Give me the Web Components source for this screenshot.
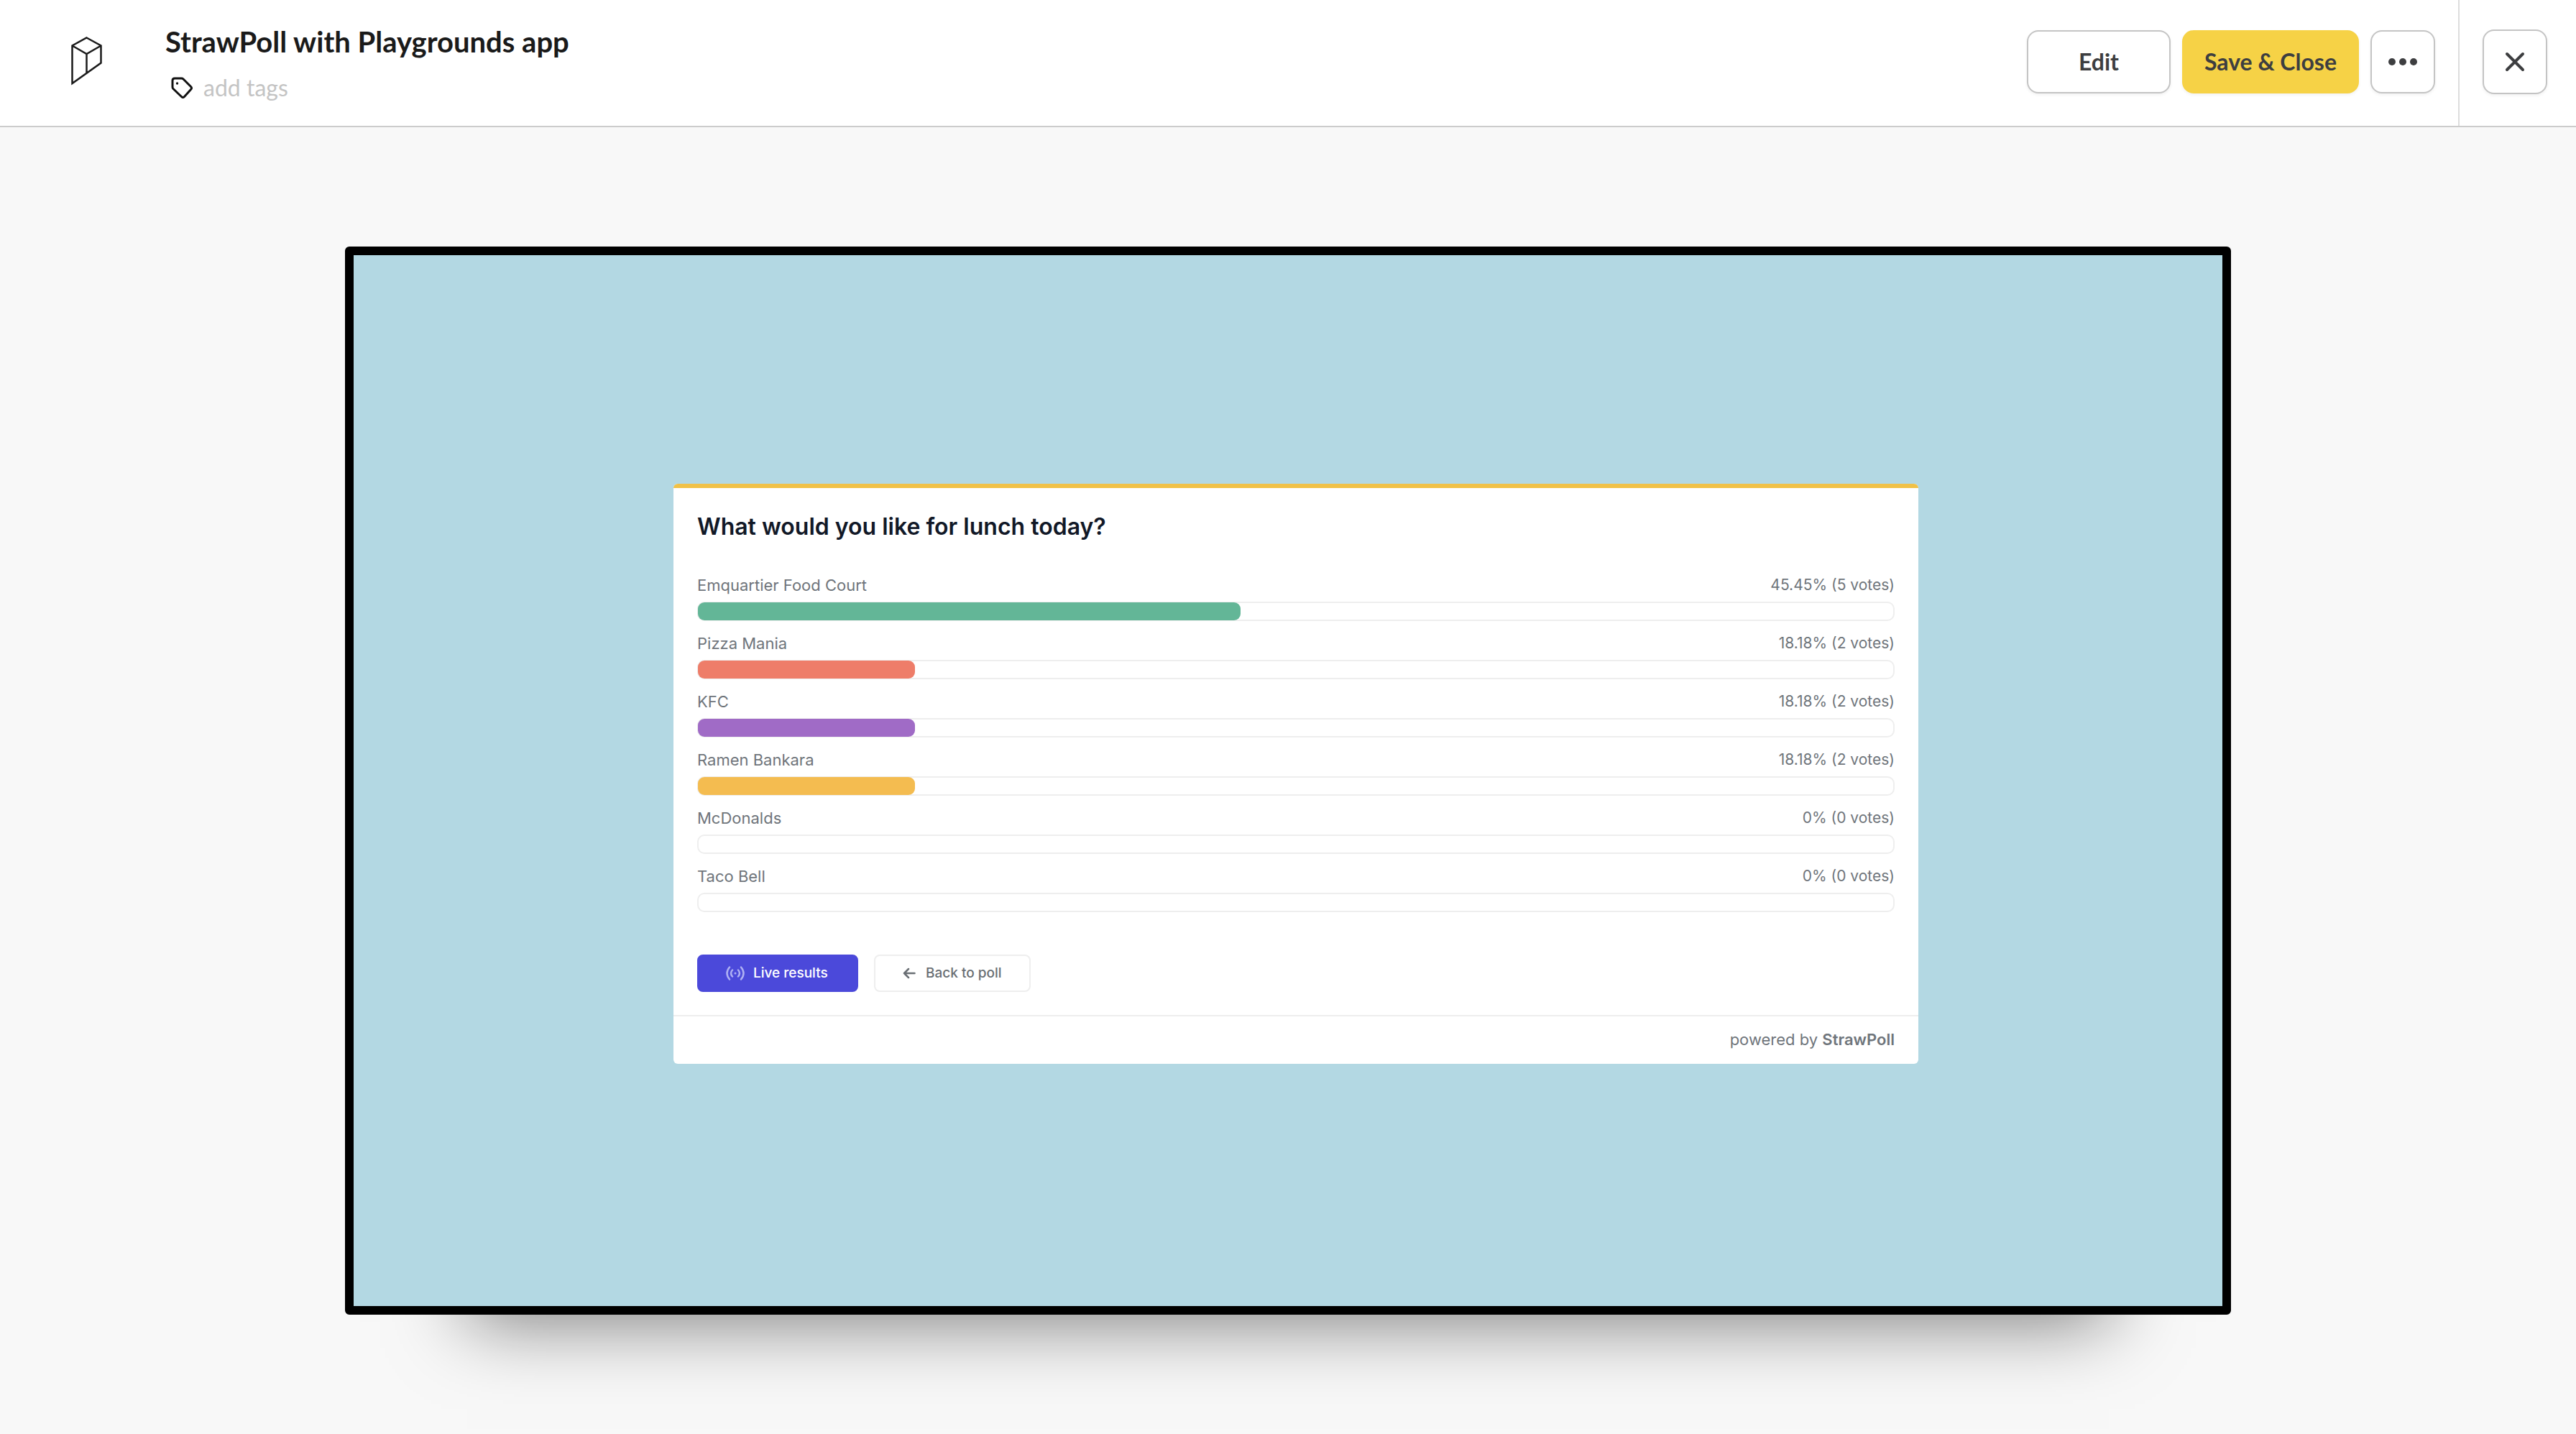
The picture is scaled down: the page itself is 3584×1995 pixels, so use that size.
<!DOCTYPE html>
<html lang="en">
<head>
<meta charset="utf-8">
<meta name="viewport" content="width=device-width, initial-scale=1">
<title>StrawPoll with Playgrounds app</title>
<style>
  html, body { margin: 0; height: 100%; }
  body { background: #f8f8f8; font-family: Lato, "Liberation Sans", sans-serif; }
</style>
</head>
<body>
<app-shell>
  <app-header slot="header">
    <brand-logo slot="logo"></brand-logo>
    <app-heading slot="heading">StrawPoll with Playgrounds app</app-heading>
    <app-button slot="actions" wide>Edit</app-button>
    <app-button slot="actions" primary>Save &amp; Close</app-button>
    <app-button slot="actions" square label="More actions">
      <svg width="40" height="16" viewBox="0 0 40 16" fill="#3d3e40" aria-hidden="true"><circle cx="5" cy="8" r="5"/><circle cx="20" cy="8" r="5"/><circle cx="35" cy="8" r="5"/></svg>
    </app-button>
    <app-button slot="close" square tall label="Close">
      <svg width="28" height="28" viewBox="0 0 28 28" fill="none" stroke="#3d3e40" stroke-width="4" stroke-linecap="round" aria-hidden="true"><path d="M3 3l22 22M25 3L3 25"/></svg>
    </app-button>
  </app-header>
  <preview-screen>
    <poll-card question="What would you like for lunch today?">
      <poll-option percent="45.45" votes="5" color="#63b697">Emquartier Food Court</poll-option>
      <poll-option percent="18.18" votes="2" color="#ee7d69">Pizza Mania</poll-option>
      <poll-option percent="18.18" votes="2" color="#a06bc6">KFC</poll-option>
      <poll-option percent="18.18" votes="2" color="#f4bc50">Ramen Bankara</poll-option>
      <poll-option percent="0" votes="0">McDonalds</poll-option>
      <poll-option percent="0" votes="0">Taco Bell</poll-option>
      <poll-button slot="actions" primary>
        <svg slot="icon" width="26" height="20" viewBox="0 0 26 20" fill="none" stroke="#aeb0f3" stroke-width="2.500" stroke-linecap="round" aria-hidden="true"><path d="M5 1.500Q-2 10 5 18.500M21 1.500Q28 10 21 18.500M9 5.500Q5 10 9 14.500M17 5.500Q21 10 17 14.500"/><circle cx="13" cy="10" r="1.500" fill="#aeb0f3" stroke="none"/></svg>
        Live results
      </poll-button>
      <poll-button slot="actions">
        <svg slot="icon" width="20" height="16" viewBox="0 0 20 16" fill="none" stroke="#6a6f74" stroke-width="2.500" stroke-linecap="round" stroke-linejoin="round" aria-hidden="true"><path d="M8 2L2 8l6 6M2 8h14.500"/></svg>
        Back to poll
      </poll-button>
    </poll-card>
  </preview-screen>
</app-shell>

<script>
  const define = (name, html, setup) => {
    const template = document.createElement('template');
    template.innerHTML = html;
    customElements.define(name, class extends HTMLElement {
      constructor() {
        super();
        this.attachShadow({ mode: 'open' }).append(template.content.cloneNode(true));
      }
      connectedCallback() {
        if (setup) setup(this, this.shadowRoot);
      }
    });
  };

  define('app-shell', `
    <style>
      :host { display: flex; flex-direction: column; min-height: 100vh; }
      main { flex: 1; display: flex; align-items: center; justify-content: center; }
    </style>
    <slot name="header"></slot>
    <main><slot></slot></main>`);

  define('app-header', `
    <style>
      :host { display: block; background: #fff; border-bottom: 2px solid #ccc; }
      header { display: flex; align-items: flex-start; padding: 0 40px 0 96px; }
      .logo { padding-top: 48px; width: 134px; flex: none; }
      .heading { flex: 1; padding-top: 34px; }
      .actions { display: flex; gap: 16px; padding: 42px 32px 0 0; }
      .close { border-left: 2px solid #ddd; padding: 41px 0 44px 32px; }
    </style>
    <header>
      <div class="logo"><slot name="logo"></slot></div>
      <div class="heading"><slot name="heading"></slot></div>
      <div class="actions"><slot name="actions"></slot></div>
      <div class="close"><slot name="close"></slot></div>
    </header>`);

  define('brand-logo', `
    <style>:host, svg { display: block; }</style>
    <svg width="48" height="72" viewBox="0 0 48 72" fill="none" stroke="#1b1b1b" stroke-width="2.500" role="img" aria-label="Home">
      <path d="M24.500 4.500L44.500 15.500V39.500L4.500 68V15.500ZM4.500 15.500L24.500 27L44.500 15.500M24.500 27V53.500"/>
    </svg>`);

  define('app-heading', `
    <style>
      :host { display: block; }
      h1 { margin: 0; font-size: 40px; line-height: 48px; font-weight: 700; color: #1a1a1a; }
      label { display: flex; align-items: center; gap: 14px; margin-top: 20px; padding-left: 7px; }
      svg { display: block; }
      input { flex: 1; min-width: 0; border: 0; padding: 0; outline: 0; background: none; height: 40px; font: 32px/40px Lato, "Liberation Sans", sans-serif; color: #1a1a1a; }
      input::placeholder { color: #c4c4c4; opacity: 1; }
    </style>
    <h1><slot></slot></h1>
    <label>
      <svg width="32" height="32" viewBox="0 0 32 32" fill="none" stroke="#111" stroke-width="3" stroke-linejoin="round" aria-hidden="true">
        <path d="M6 3H15.500Q17 3 18 4L28.500 14.500Q30.500 16.500 28.500 18.500L19.500 28.500Q17.500 30.500 15.500 28.500L4 17.500Q3 16.500 3 15V6Q3 3 6 3Z"/>
        <circle cx="9.500" cy="10" r="1.700" fill="#111" stroke="none"/>
      </svg>
      <input type="text" aria-label="Tags" placeholder="add tags">
    </label>`);

  define('app-button', `
    <style>
      :host { display: block; }
      button { box-sizing: border-box; display: flex; align-items: center; justify-content: center; height: 88px; padding: 0 24px; border: 2px solid #c4c4c4; border-radius: 16px; background: #fff; color: #3d3e40; font: 700 32px/40px Lato, "Liberation Sans", sans-serif; box-shadow: 0 2px 4px rgba(0, 0, 0, .06); }
      :host([wide]) button { min-width: 200px; }
      :host([primary]) button { min-width: 246px; background: #f6d246; border-color: #f6d246; }
      :host([square]) button { width: 90px; padding: 0; }
      :host([tall]) button { height: 90px; }
      ::slotted(svg) { display: block; }
    </style>
    <button type="button"><slot></slot></button>`, (host, root) => {
      if (host.hasAttribute('label')) root.querySelector('button').setAttribute('aria-label', host.getAttribute('label'));
    });

  define('preview-screen', `
    <style>
      :host { box-sizing: content-box; width: 72.545%; aspect-ratio: 16 / 9; border: 12px solid #000; border-radius: 6px; background: #b3d8e3; box-shadow: 0 180px 100px -170px rgba(0, 0, 0, .5); display: block; }
      .stage { box-sizing: border-box; height: 100%; display: flex; align-items: center; justify-content: center; padding: 0 0 20px 22px; }
    </style>
    <div class="stage"><slot></slot></div>`);

  define('poll-card', `
    <style>
      :host { display: block; width: 100%; max-width: 1732px; overflow: hidden; border-radius: 6px; background: #fff; color: #6f757b; font-family: Inter, "Liberation Sans", sans-serif; font-size: 22px; line-height: 28px; }
      .body { border-top: 6px solid #f0c148; padding: 34px 33px 32px; }
      h2 { margin: 0 0 47px; font-size: 32px; line-height: 40px; font-weight: 600; color: #111827; }
      .options { display: flex; flex-direction: column; gap: 17px; }
      .actions { display: flex; gap: 22px; margin-top: 59px; }
      footer { border-top: 2px solid #eee; padding: 18px 33px 20px; text-align: right; }
      a { color: inherit; text-decoration: none; font-weight: 600; }
    </style>
    <div class="body">
      <h2></h2>
      <div class="options"><slot></slot></div>
      <div class="actions"><slot name="actions"></slot></div>
    </div>
    <footer>powered by <a href="#">StrawPoll</a></footer>`, (host, root) => {
      root.querySelector('h2').textContent = host.getAttribute('question');
    });

  define('poll-option', `
    <style>
      :host { display: block; }
      .row { display: flex; justify-content: space-between; margin-bottom: 9px; }
      .score { font-size: 21px; }
      .track { box-sizing: border-box; height: 27px; border: 2px solid #eee; border-radius: 10px; background: #fff; }
      .fill { height: 25px; margin: -1px; border-radius: 9px; }
    </style>
    <div class="row"><span id="name"><slot></slot></span><span class="score"></span></div>
    <div class="track" role="progressbar" aria-labelledby="name" aria-valuemin="0" aria-valuemax="100"><div class="fill"></div></div>`, (host, root) => {
      const percent = host.getAttribute('percent');
      root.querySelector('.score').textContent = percent + '% (' + host.getAttribute('votes') + ' votes)';
      root.querySelector('.track').setAttribute('aria-valuenow', percent);
      const fill = root.querySelector('.fill');
      fill.style.width = percent + '%';
      fill.style.background = host.getAttribute('color') || 'none';
    });

  define('poll-button', `
    <style>
      :host { display: block; }
      button { box-sizing: border-box; display: flex; align-items: center; gap: 12px; height: 52px; padding: 0 38px; border: 2px solid #eee; border-radius: 8px; background: #fff; color: #6a6f74; font: 500 19px/24px Inter, "Liberation Sans", sans-serif; }
      :host([primary]) button { min-width: 224px; background: #4b49da; border-color: #4b49da; color: #fff; }
      ::slotted(svg) { display: block; }
    </style>
    <button type="button"><slot name="icon"></slot><span><slot></slot></span></button>`);
</script>
</body>
</html>
